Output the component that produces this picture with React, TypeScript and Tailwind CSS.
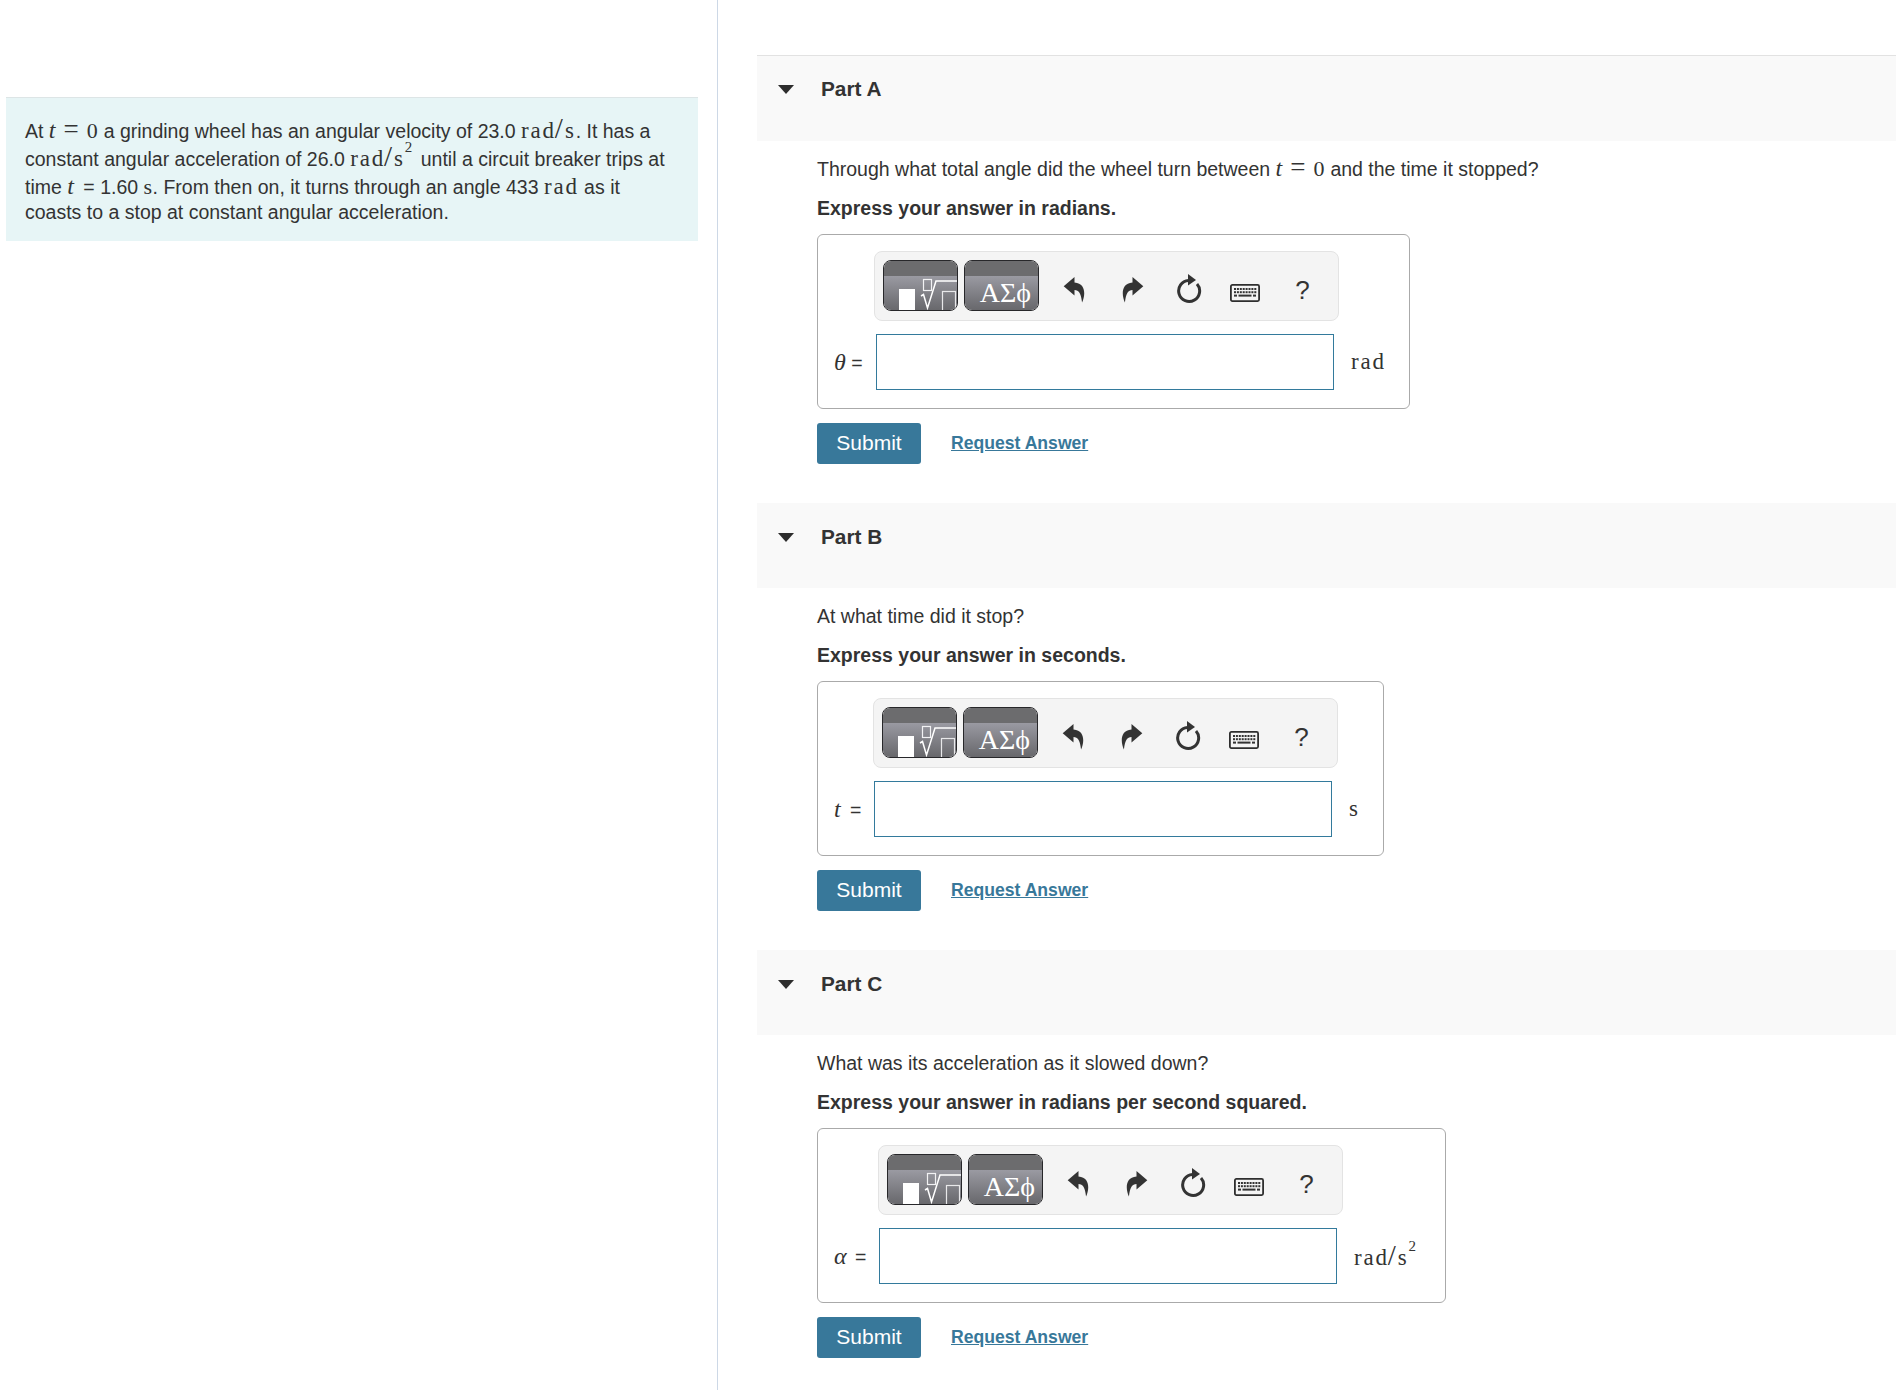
import React from "react";

function I({ children }: { children: React.ReactNode }) {
  return <span className="[font-family:'Liberation_Serif',serif] italic text-[24px] leading-none">{children}</span>;
}
function R({ children }: { children: React.ReactNode }) {
  return <span className="[font-family:'Liberation_Serif',serif] text-[23px] tracking-[1.8px] leading-none">{children}</span>;
}
function Rs({ children }: { children: React.ReactNode }) {
  return <span className="[font-family:'Liberation_Serif',serif] text-[22px] tracking-[0.5px] leading-none">{children}</span>;
}
function Sq() {
  return <sup className="[font-family:'Liberation_Serif',serif] text-[15px] align-[7px] leading-none">2</sup>;
}
function Eq() {
  return <span className="[font-family:'Liberation_Serif',serif] text-[27px] mx-[8px] leading-none">=</span>;
}
function RadS({ two }: { two?: boolean }) {
  return (
    <span className="whitespace-nowrap">
      <R>rad</R>
      <span className="[font-family:'Liberation_Serif',serif] text-[29px] font-light leading-none -ml-[1px] mr-[2px]">/</span>
      <R>s</R>
      {two && <Sq />}
    </span>
  );
}

function MathButton() {
  return (
    <div className="relative w-[75px] h-[51px] rounded-[8px] border border-[#27272a] overflow-hidden flex flex-col">
      <div className="h-[15px] bg-[#6c6c6e]" />
      <div className="flex-1 bg-gradient-to-b from-[#9a9aa2] to-[#68686c]" />
      <svg className="absolute inset-0" width="75" height="51" viewBox="0 0 75 51" fill="none">
        <rect x="15" y="28" width="16" height="23" fill="#ffffff" />
        <rect x="39.5" y="18.5" width="8" height="11" stroke="#f2f2f4" strokeWidth="1.2" />
        <path d="M37 35 L39.5 33.5 L43.5 47 L52 20 H73" stroke="#ffffff" strokeWidth="1.5" />
        <rect x="58.5" y="30.5" width="13" height="20" stroke="#e8e8ea" strokeWidth="1.2" />
      </svg>
    </div>
  );
}

function GreekButton() {
  return (
    <div className="w-[75px] h-[51px] rounded-[8px] border border-[#27272a] overflow-hidden flex flex-col">
      <div className="h-[15px] bg-[#6c6c6e]" />
      <div className="flex-1 bg-gradient-to-b from-[#9a9aa2] to-[#68686c] flex items-center justify-end pr-[7px] text-white text-[28px] leading-none [font-family:'Liberation_Serif',serif]">
        ΑΣϕ
      </div>
    </div>
  );
}

function Undo({ flip }: { flip?: boolean }) {
  return (
    <svg width="23" height="27" viewBox="0 0 21 25" className={flip ? "-scale-x-100" : ""} fill="#333333">
      <path d="M10.5 1 L0.5 9.5 L10.5 18 V13 C14.5 13 16.5 16 17.5 24.5 C20.5 18 21.5 7 10.5 6 Z" />
    </svg>
  );
}

function Reload() {
  return (
    <svg width="26" height="30" viewBox="0 0 26 30" fill="none">
      <path d="M12.5 6.5 A10.5 10.5 0 1 0 21 10" stroke="#333333" strokeWidth="3" />
      <path d="M12 0 L20 6 L12 11.5 Z" fill="#333333" />
    </svg>
  );
}

function Keyboard() {
  const top = [0, 1, 2, 3, 4, 5, 6, 7];
  return (
    <svg width="30" height="18" viewBox="0 0 30 18" fill="none">
      <rect x="0.9" y="0.9" width="28.2" height="16.2" rx="1.5" stroke="#2e2e2e" strokeWidth="1.8" />
      {top.map((i) => (
        <rect key={`a${i}`} x={4 + i * 2.9} y="4" width="2" height="2" fill="#333333" />
      ))}
      {top.map((i) => (
        <rect key={`b${i}`} x={4 + i * 2.9} y="7.2" width="2" height="2" fill="#333333" />
      ))}
      <rect x="4" y="10.6" width="3" height="2" fill="#333333" />
      <rect x="8.5" y="10.6" width="13" height="2" fill="#333333" />
      <rect x="23" y="10.6" width="3" height="2" fill="#333333" />
    </svg>
  );
}

function Toolbar({ offset }: { offset: string }) {
  const cell = "w-[57px] flex items-center justify-center";
  return (
    <div className={`${offset} w-[465px] h-[70px] rounded-[8px] bg-[#f4f4f4] border border-[#e3e3e3] flex items-center pl-[8px]`}>
      <div className="flex gap-[6px] mr-[7px] mb-[1px]">
        <MathButton />
        <GreekButton />
      </div>
      <div className={`${cell} pt-[6px]`}><Undo /></div>
      <div className={`${cell} pt-[6px] pl-[2px]`}><Undo flip /></div>
      <div className={`${cell} pt-[6px]`}><Reload /></div>
      <div className={`${cell} pt-[14px] pr-[2px]`}><Keyboard /></div>
      <div className={`${cell} pt-[8px] text-[26px] leading-none text-[#333]`}>?</div>
    </div>
  );
}

function Part({
  name,
  question,
  express,
  width,
  labelW,
  label,
  unit,
  offset,
  first,
}: {
  name: string;
  question: React.ReactNode;
  express: string;
  width: string;
  labelW: string;
  label: React.ReactNode;
  unit: React.ReactNode;
  offset: string;
  first?: boolean;
}) {
  return (
    <section className="mb-[39px]">
      <div className={`bg-[#f9f9f9] flex items-start ${first ? "h-[86px] border-t border-[#e2e2e2] pt-[19px]" : "h-[85px] pt-[20px]"}`}>
        <svg width="16" height="9" viewBox="0 0 16 9" className="ml-[21px] mt-[10px]" fill="#2d2d2d">
          <path d="M0 0 H16 L8 9 Z" />
        </svg>
        <h2 className="ml-[27px] text-[20.8px] leading-[28px] font-bold text-[#333]">{name}</h2>
      </div>
      <div className={`pl-[60px] ${first ? "pt-[13px]" : "pt-[14px]"}`}>
        <p className="text-[19.5px] leading-[28px] text-[#333]">{question}</p>
        <p className="mt-[11px] text-[19.5px] leading-[28px] font-bold text-[#333]">{express}</p>
        <div className={`mt-[12px] h-[175px] border border-[#aaaaaa] rounded-[6px] pt-[16px] ${width}`}>
          <div className={`grid ${labelW} gap-y-[13px] items-center`}>
            <div className="col-start-2">
              <Toolbar offset={offset} />
            </div>
            <div className="col-start-1 row-start-2 pl-[16px] pt-[3px] whitespace-nowrap text-[#333] text-[19.5px]">{label}</div>
            <div className="col-start-2 row-start-2 h-[56px] border-[1.5px] border-[#337a9c] bg-white" />
            <div className="col-start-3 row-start-2 pl-[17px] pt-[1px] whitespace-nowrap text-[#333]">{unit}</div>
          </div>
        </div>
        <div className="mt-[14px] flex items-center">
          <button className="w-[104px] h-[41px] rounded-[3px] bg-[#38789a] text-white text-[21px] font-normal pb-[1px]">Submit</button>
          <a className="ml-[30px] mb-[1px] text-[17.6px] font-bold text-[#38789a] underline">Request Answer</a>
        </div>
      </div>
    </section>
  );
}

export default function App() {
  return (
    <div className="flex w-[1896px] h-[1390px] overflow-hidden bg-white [font-family:'Liberation_Sans',sans-serif] text-[#333]">
      <div className="w-[718px] shrink-0 border-r border-[#cdd8e6] pl-[6px] pr-[19px] pt-[97px]">
        <div className="h-[144px] bg-[#e7f5f6] border-t border-[#dde5e6] pl-[19px] pt-[16px] text-[19.5px] text-[#333]">
          <div className="h-[28px] leading-[28px] whitespace-nowrap">
            At <I>t</I><Eq /><Rs>0</Rs> a grinding wheel has an angular velocity of 23.0 <RadS />. It has a
          </div>
          <div className="h-[31px] leading-[28px] whitespace-nowrap">
            constant angular acceleration of 26.0 <RadS two /><span className="ml-[3px]"> until a circuit breaker trips at</span>
          </div>
          <div className="h-[27px] leading-[28px] whitespace-nowrap">
            time <I>t</I><span className="ml-[4px]"> = 1.60 </span><Rs>s</Rs>. From then on, it turns through an angle 433 <R>rad</R> as it
          </div>
          <div className="h-[26px] leading-[24px] whitespace-nowrap">coasts to a stop at constant angular acceleration.</div>
        </div>
      </div>
      <div className="flex-1 pl-[39px] pt-[55px]">
        <Part
          first
          name="Part A"
          question={<>Through what total angle did the wheel turn between <I>t</I><Eq /><Rs>0</Rs> and the time it stopped?</>}
          express="Express your answer in radians."
          width="w-[593px]"
          labelW="grid-cols-[58px_458px_auto]"
          label={<><I>θ</I> =</>}
          unit={<R>rad</R>}
          offset="-ml-[2px]"
        />
        <Part
          name="Part B"
          question="At what time did it stop?"
          express="Express your answer in seconds."
          width="w-[567px]"
          labelW="grid-cols-[56px_458px_auto]"
          label={<><I>t</I><span className="ml-[4px]"> =</span></>}
          unit={<R>s</R>}
          offset="-ml-[1px]"
        />
        <Part
          name="Part C"
          question="What was its acceleration as it slowed down?"
          express="Express your answer in radians per second squared."
          width="w-[629px]"
          labelW="grid-cols-[61px_458px_auto]"
          label={<><I>α</I><span className="ml-[3px]"> =</span></>}
          unit={<RadS two />}
          offset="-ml-[1px]"
        />
      </div>
    </div>
  );
}
